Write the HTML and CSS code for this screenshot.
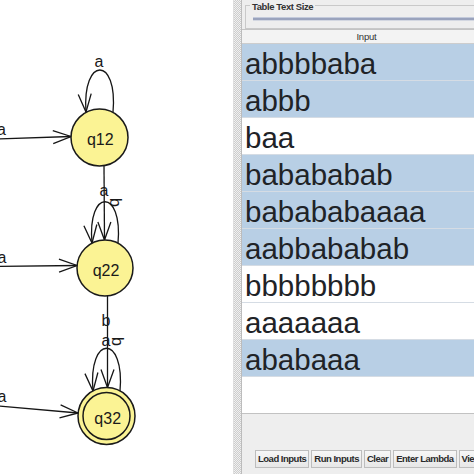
FILE: index.html
```html
<!DOCTYPE html>
<html>
<head>
<meta charset="utf-8">
<link rel="stylesheet" href="styles.css">
</head>
<body>
<div class="app">
  <div class="canvas">
    <svg class="diagram" width="233" height="474" viewBox="0 0 233 474">
      <defs>
        <marker id="ah" markerUnits="userSpaceOnUse" markerWidth="22" markerHeight="16" refX="20" refY="8" orient="auto">
          <path d="M2,1.5 L20,8 L2,14.5" fill="none" stroke="#161616" stroke-width="1.3"/>
        </marker>
      </defs>
      <g class="edges">
        <line x1="-2" y1="139" x2="71" y2="136.5" marker-end="url(#ah)"/>
        <line x1="-2" y1="266.3" x2="77" y2="265.5" marker-end="url(#ah)"/>
        <line x1="-2" y1="406" x2="78" y2="413" marker-end="url(#ah)"/>
        <path d="M113,112 C118,56 82,56 86,112" marker-end="url(#ah)"/>
        <line x1="104" y1="166" x2="104.5" y2="240" marker-end="url(#ah)"/>
        <path d="M118,243 C123,188 87,188 92,243" marker-end="url(#ah)"/>
        <line x1="107.5" y1="296" x2="107.5" y2="387.5" marker-end="url(#ah)"/>
        <path d="M120,391 C125,334 88,334 93,391" marker-end="url(#ah)"/>
      </g>
      <g class="nodes">
        <circle cx="99.5" cy="137.5" r="28.5"/>
        <circle cx="105" cy="268" r="28"/>
        <circle cx="106.5" cy="416" r="28.5"/>
        <circle cx="106.5" cy="416" r="23.5"/>
      </g>
      <g class="labels">
        <text x="100.3" y="144.7">q12</text>
        <text x="106" y="275.6">q22</text>
        <text x="107.7" y="423.6">q32</text>
        <text x="99" y="67">a</text>
        <text x="1.5" y="135">a</text>
        <text x="2" y="263">a</text>
        <text x="2" y="402">a</text>
        <text x="104" y="196">a</text>
        <text x="0" y="5.8" transform="translate(116 202.5) rotate(90)">b</text>
        <text x="106" y="326">b</text>
        <text x="106" y="346">a</text>
        <text x="0" y="5.8" transform="translate(117.5 341.5) rotate(90)">b</text>
      </g>
    </svg>
  </div>
  <div class="divider"></div>
  <div class="panel">
    <div class="settings">
      <div class="fieldset">
        <span class="legend">Table Text Size</span>
        <div class="slider"></div>
      </div>
    </div>
    <div class="table">
      <div class="thead">Input</div>
      <div class="row sel">abbbbaba</div>
      <div class="row sel">abbb</div>
      <div class="row">baa</div>
      <div class="row sel">babababab</div>
      <div class="row sel">babababaaaa</div>
      <div class="row sel">aabbababab</div>
      <div class="row">bbbbbbbb</div>
      <div class="row">aaaaaaa</div>
      <div class="row sel">ababaaa</div>
    </div>
    <div class="lower"></div>
    <div class="buttons">
      <button class="btn">Load Inputs</button>
      <button class="btn">Run Inputs</button>
      <button class="btn">Clear</button>
      <button class="btn">Enter Lambda</button>
      <button class="btn">View Trace</button>
    </div>
  </div>
</div>
</body>
</html>
```

FILE: styles.css
```css
html, body {
  margin: 0;
  padding: 0;
  width: 474px;
  height: 474px;
  overflow: hidden;
  background: #ffffff;
}

.app {
  display: flex;
  width: 520px;
  height: 474px;
}

.canvas {
  flex: none;
  width: 233px;
  height: 474px;
  background: #ffffff;
  border-right: 1px solid #dedede;
}

.diagram {
  display: block;
}

.edges line,
.edges path {
  stroke: #161616;
  stroke-width: 1.3;
  fill: none;
}

.nodes circle {
  fill: #fbf394;
  stroke: #1a1a1a;
  stroke-width: 1.5;
}

.labels text {
  font-family: "Liberation Sans", Arial, sans-serif;
  font-size: 16px;
  fill: #1a1a1a;
  text-anchor: middle;
}

.divider {
  flex: none;
  width: 7px;
  height: 474px;
  background: conic-gradient(#cdcdcd 25%, #f0f0f0 0 50%, #cdcdcd 0 75%, #f0f0f0 0) 0 0 / 2px 2px;
}

.panel {
  flex: none;
  width: 249px;
  height: 474px;
  border-left: 1px solid #bcbcbc;
  background: #eeeeee;
  display: flex;
  flex-direction: column;
}

.settings {
  height: 29px;
  padding: 5px 0 0 3px;
  box-sizing: border-box;
}

.fieldset {
  position: relative;
  height: 24px;
  box-sizing: border-box;
  border: 1px solid #c9c9c9;
  border-right: none;
  padding: 11px 0 0 7px;
}

.legend {
  position: absolute;
  top: -5px;
  left: 4px;
  padding: 0 2px;
  background: #eeeeee;
  font: bold 9.5px/12px "Liberation Sans", Arial, sans-serif;
  letter-spacing: -0.4px;
  color: #333333;
}

.slider {
  height: 4px;
  background: linear-gradient(#c3cadb 0 1px, #9aa3bd 1px 3px, #d3d7e1 3px);
}

.table {
  height: 384px;
  box-sizing: border-box;
  border-top: 1px solid #c4c4c4;
  background: #ffffff;
}

.thead {
  height: 14px;
  box-sizing: border-box;
  padding-top: 1px;
  border-bottom: 1px solid #cdcdcd;
  background: #f3f3f3;
  text-align: center;
  font: 9.5px/12px "Liberation Sans", Arial, sans-serif;
  letter-spacing: -0.2px;
  color: #333333;
}

.row {
  height: 37px;
  box-sizing: border-box;
  padding: 3px 0 0 3px;
  border-bottom: 1px solid #d5dce4;
  font: 29.5px/34px "Liberation Sans", Arial, sans-serif;
  color: #1f2327;
  white-space: nowrap;
}

.row.sel {
  background: #b8cfe5;
}

.lower {
  height: 35px;
  box-sizing: border-box;
  border-top: 1px solid #c2c2c2;
}

.buttons {
  height: 26px;
  box-sizing: border-box;
  padding: 2px 0 0 13px;
  display: flex;
  gap: 2px;
  align-items: flex-start;
}

.btn {
  flex: none;
  height: 18px;
  margin: 0;
  padding: 0 2px;
  border: 1px solid #bdbdbd;
  border-radius: 0;
  background: linear-gradient(#f7f7f7, #e7e7e7);
  font: bold 9.5px/16px "Liberation Sans", Arial, sans-serif;
  letter-spacing: -0.5px;
  color: #2a2a2a;
  white-space: nowrap;
}
```
